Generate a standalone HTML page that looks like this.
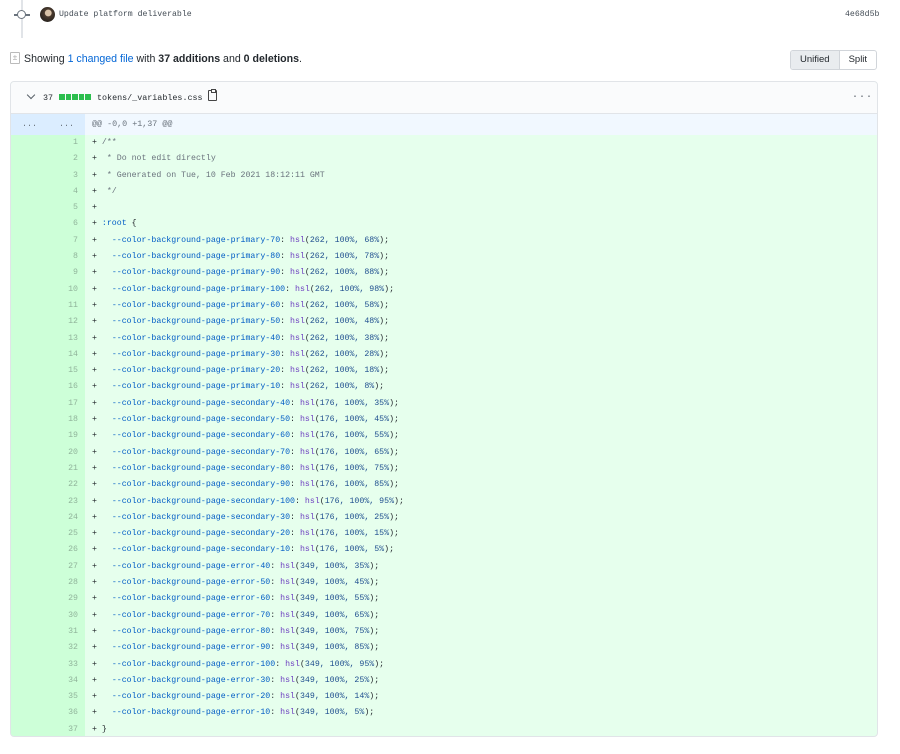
<!DOCTYPE html>
<html><head><meta charset="utf-8"><style>
*{box-sizing:border-box;margin:0;padding:0}
body{width:900px;height:754px;background:#fff;font-family:"Liberation Sans",sans-serif;color:#24292e;position:relative;overflow:hidden}
.mono{font-family:"Liberation Mono",monospace}
.tl{position:absolute;left:21px;top:0;width:2px;height:38px;background:#e1e4e8}
.dot{position:absolute;left:17px;top:10px;width:9px;height:9px;border:1.5px solid #6a737d;border-radius:50%;background:#fff}
.dl{position:absolute;left:14px;top:14px;width:16px;height:1.5px;background:#6a737d}
.av{position:absolute;left:40px;top:7px;width:15px;height:15px;border-radius:50%;background:radial-gradient(circle at 55% 40%,#d9c2a8 0 25%,#4a3a2e 30%,#2b2520 70%)}
.msg{position:absolute;left:59px;top:10px;font-size:8.2px;color:#444d56}
.sha{position:absolute;left:845px;top:10px;font-size:8.2px;color:#444d56}
.show{position:absolute;left:24px;top:53px;font-size:10.6px;color:#24292e}
.show a{color:#0366d6;text-decoration:none}
.ico{position:absolute;left:10px;top:52px;width:10px;height:12px;border:1px solid #bbb;border-radius:1px;font-size:8px;line-height:9px;text-align:center;color:#aaa}
.btns{position:absolute;left:790px;top:50px;height:20px;display:flex;border:1px solid #d1d5da;border-radius:3px;font-size:9.5px;overflow:hidden}
.btns div{padding:0 9px;line-height:18px}
.btns .on{background:#e9ecef;border-right:1px solid #d1d5da}
.box{position:absolute;left:10px;top:81px;width:868px;height:656px;border:1px solid #e1e4e8;border-radius:4px;overflow:hidden;background:#e6ffed}
.hdr{height:32px;background:#fafbfc;border-bottom:1px solid #e1e4e8;position:relative;font-size:8.4px}
.hdr .chev{position:absolute;left:17px;top:10px;width:6px;height:6px;border-right:1.3px solid #586069;border-bottom:1.3px solid #586069;transform:rotate(45deg)}
.hdr .n{position:absolute;left:32px;top:11px}
.hdr .bars{position:absolute;left:48px;top:12px;display:flex;gap:1px}
.hdr .bars i{width:5.6px;height:6px;background:#2cbe4e;display:block}
.hdr .fn{position:absolute;left:86px;top:11px}
.hdr .clip{position:absolute;left:197px;top:8px;width:9px;height:11px;border:1.2px solid #444;border-radius:1px}
.hdr .clip:before{content:"";position:absolute;left:1.5px;top:-2.5px;width:3px;height:2.5px;border:1.2px solid #444;background:#fafbfc}
.hdr .more{position:absolute;left:841px;top:11px;font-size:10px;color:#586069;letter-spacing:1px;line-height:10px}
.hunk{height:21px;background:#f1f8ff;display:flex;font-size:8.4px;color:#6a737d;line-height:21px}
.hunk .g{width:74px;background:#dbedff;display:flex}
.hunk .g span{width:37px;text-align:center}
.hunk .c{padding-left:7px}
.row{height:16.3px;display:flex;font-size:8.25px;line-height:16.3px;white-space:pre}
.row .ln{width:74px;background:#cdffd8;text-align:right;padding-right:7px;color:rgba(27,31,35,.35)}
.row .cd{padding-left:7px;color:#24292e}
.p{color:#005cc5}.f{color:#6f42c1}.v{color:#1f4f8f}.cm{color:#6a737d}
</style></head><body>
<div class="tl"></div><div class="dl"></div><div class="dot"></div><div class="av"></div>
<div class="msg mono">Update platform deliverable</div>
<div class="sha mono">4e68d5b</div>
<div class="ico">±</div>
<div class="show">Showing <a>1 changed file</a> with <b>37 additions</b> and <b>0 deletions</b>.</div>
<div class="btns"><div class="on">Unified</div><div>Split</div></div>
<div class="box">
<div class="hdr mono"><div class="chev"></div><span class="n">37</span><div class="bars"><i></i><i></i><i></i><i></i><i></i></div><span class="fn">tokens/_variables.css</span><div class="clip"></div><span class="more">···</span></div>
<div class="hunk mono"><div class="g"><span>...</span><span>...</span></div><div class="c">@@ -0,0 +1,37 @@</div></div>
<div class="mono">
<div class="row"><div class="ln">1</div><div class="cd">+ <span class="cm">/**</span></div></div>
<div class="row"><div class="ln">2</div><div class="cd">+ <span class="cm"> * Do not edit directly</span></div></div>
<div class="row"><div class="ln">3</div><div class="cd">+ <span class="cm"> * Generated on Tue, 10 Feb 2021 18:12:11 GMT</span></div></div>
<div class="row"><div class="ln">4</div><div class="cd">+ <span class="cm"> */</span></div></div>
<div class="row"><div class="ln">5</div><div class="cd">+</div></div>
<div class="row"><div class="ln">6</div><div class="cd">+ <span class="p">:root</span> {</div></div>
<div class="row"><div class="ln">7</div><div class="cd">+   <span class="p">--color-background-page-primary-70</span>: <span class="f">hsl</span>(<span class="v">262, 100%, 68%</span>);</div></div>
<div class="row"><div class="ln">8</div><div class="cd">+   <span class="p">--color-background-page-primary-80</span>: <span class="f">hsl</span>(<span class="v">262, 100%, 78%</span>);</div></div>
<div class="row"><div class="ln">9</div><div class="cd">+   <span class="p">--color-background-page-primary-90</span>: <span class="f">hsl</span>(<span class="v">262, 100%, 88%</span>);</div></div>
<div class="row"><div class="ln">10</div><div class="cd">+   <span class="p">--color-background-page-primary-100</span>: <span class="f">hsl</span>(<span class="v">262, 100%, 98%</span>);</div></div>
<div class="row"><div class="ln">11</div><div class="cd">+   <span class="p">--color-background-page-primary-60</span>: <span class="f">hsl</span>(<span class="v">262, 100%, 58%</span>);</div></div>
<div class="row"><div class="ln">12</div><div class="cd">+   <span class="p">--color-background-page-primary-50</span>: <span class="f">hsl</span>(<span class="v">262, 100%, 48%</span>);</div></div>
<div class="row"><div class="ln">13</div><div class="cd">+   <span class="p">--color-background-page-primary-40</span>: <span class="f">hsl</span>(<span class="v">262, 100%, 38%</span>);</div></div>
<div class="row"><div class="ln">14</div><div class="cd">+   <span class="p">--color-background-page-primary-30</span>: <span class="f">hsl</span>(<span class="v">262, 100%, 28%</span>);</div></div>
<div class="row"><div class="ln">15</div><div class="cd">+   <span class="p">--color-background-page-primary-20</span>: <span class="f">hsl</span>(<span class="v">262, 100%, 18%</span>);</div></div>
<div class="row"><div class="ln">16</div><div class="cd">+   <span class="p">--color-background-page-primary-10</span>: <span class="f">hsl</span>(<span class="v">262, 100%, 8%</span>);</div></div>
<div class="row"><div class="ln">17</div><div class="cd">+   <span class="p">--color-background-page-secondary-40</span>: <span class="f">hsl</span>(<span class="v">176, 100%, 35%</span>);</div></div>
<div class="row"><div class="ln">18</div><div class="cd">+   <span class="p">--color-background-page-secondary-50</span>: <span class="f">hsl</span>(<span class="v">176, 100%, 45%</span>);</div></div>
<div class="row"><div class="ln">19</div><div class="cd">+   <span class="p">--color-background-page-secondary-60</span>: <span class="f">hsl</span>(<span class="v">176, 100%, 55%</span>);</div></div>
<div class="row"><div class="ln">20</div><div class="cd">+   <span class="p">--color-background-page-secondary-70</span>: <span class="f">hsl</span>(<span class="v">176, 100%, 65%</span>);</div></div>
<div class="row"><div class="ln">21</div><div class="cd">+   <span class="p">--color-background-page-secondary-80</span>: <span class="f">hsl</span>(<span class="v">176, 100%, 75%</span>);</div></div>
<div class="row"><div class="ln">22</div><div class="cd">+   <span class="p">--color-background-page-secondary-90</span>: <span class="f">hsl</span>(<span class="v">176, 100%, 85%</span>);</div></div>
<div class="row"><div class="ln">23</div><div class="cd">+   <span class="p">--color-background-page-secondary-100</span>: <span class="f">hsl</span>(<span class="v">176, 100%, 95%</span>);</div></div>
<div class="row"><div class="ln">24</div><div class="cd">+   <span class="p">--color-background-page-secondary-30</span>: <span class="f">hsl</span>(<span class="v">176, 100%, 25%</span>);</div></div>
<div class="row"><div class="ln">25</div><div class="cd">+   <span class="p">--color-background-page-secondary-20</span>: <span class="f">hsl</span>(<span class="v">176, 100%, 15%</span>);</div></div>
<div class="row"><div class="ln">26</div><div class="cd">+   <span class="p">--color-background-page-secondary-10</span>: <span class="f">hsl</span>(<span class="v">176, 100%, 5%</span>);</div></div>
<div class="row"><div class="ln">27</div><div class="cd">+   <span class="p">--color-background-page-error-40</span>: <span class="f">hsl</span>(<span class="v">349, 100%, 35%</span>);</div></div>
<div class="row"><div class="ln">28</div><div class="cd">+   <span class="p">--color-background-page-error-50</span>: <span class="f">hsl</span>(<span class="v">349, 100%, 45%</span>);</div></div>
<div class="row"><div class="ln">29</div><div class="cd">+   <span class="p">--color-background-page-error-60</span>: <span class="f">hsl</span>(<span class="v">349, 100%, 55%</span>);</div></div>
<div class="row"><div class="ln">30</div><div class="cd">+   <span class="p">--color-background-page-error-70</span>: <span class="f">hsl</span>(<span class="v">349, 100%, 65%</span>);</div></div>
<div class="row"><div class="ln">31</div><div class="cd">+   <span class="p">--color-background-page-error-80</span>: <span class="f">hsl</span>(<span class="v">349, 100%, 75%</span>);</div></div>
<div class="row"><div class="ln">32</div><div class="cd">+   <span class="p">--color-background-page-error-90</span>: <span class="f">hsl</span>(<span class="v">349, 100%, 85%</span>);</div></div>
<div class="row"><div class="ln">33</div><div class="cd">+   <span class="p">--color-background-page-error-100</span>: <span class="f">hsl</span>(<span class="v">349, 100%, 95%</span>);</div></div>
<div class="row"><div class="ln">34</div><div class="cd">+   <span class="p">--color-background-page-error-30</span>: <span class="f">hsl</span>(<span class="v">349, 100%, 25%</span>);</div></div>
<div class="row"><div class="ln">35</div><div class="cd">+   <span class="p">--color-background-page-error-20</span>: <span class="f">hsl</span>(<span class="v">349, 100%, 14%</span>);</div></div>
<div class="row"><div class="ln">36</div><div class="cd">+   <span class="p">--color-background-page-error-10</span>: <span class="f">hsl</span>(<span class="v">349, 100%, 5%</span>);</div></div>
<div class="row"><div class="ln">37</div><div class="cd">+ }</div></div>
</div>
</div>
</body></html>
